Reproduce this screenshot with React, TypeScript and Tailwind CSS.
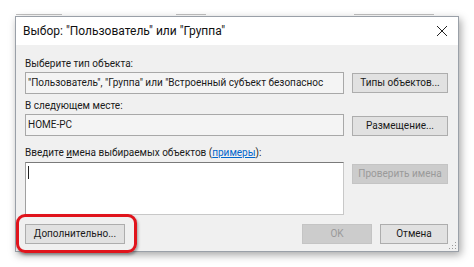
import React from "react";

const font = { fontFamily: 'Roboto, "Noto Sans", sans-serif' };

function Btn({
  children,
  disabled = false,
  className = "",
}: {
  children: React.ReactNode;
  disabled?: boolean;
  className?: string;
}) {
  return (
    <div
      className={`h-[20px] flex items-center justify-center border text-[10px] leading-none whitespace-nowrap ${
        disabled
          ? "bg-[#cccccc] border-[#c4c4c4] text-[#9a9a9a]"
          : "bg-[#e1e1e1] border-[#adadad] text-[#1a1a1a]"
      } ${className}`}
    >
      {children}
    </div>
  );
}

export default function App() {
  return (
    <div className="w-[474px] h-[267px] bg-white overflow-hidden relative" style={font}>
      {/* faint window behind */}
      <div className="absolute left-[16px] top-[14px] w-[46px] h-px bg-[#9a9a9a] opacity-60" />
      <div className="absolute left-[176px] top-[14px] w-[30px] h-px bg-[#9a9a9a] opacity-60" />
      <div className="absolute left-[354px] top-[14px] w-[80px] h-px bg-[#9a9a9a] opacity-60" />

      <div className="ml-[15px] mt-[16px] w-[444px] h-[236px] flex flex-col border border-[#9aa0a8] shadow-[2px_3px_8px_rgba(0,0,0,0.35)] relative">
        {/* title bar */}
        <div className="h-[28px] bg-white flex items-center justify-between pl-[7px] pr-[8px] shrink-0">
          <div className="text-[12px] text-[#111]">Выбор: "Пользователь" или "Группа"</div>
          <svg width="12" height="12" viewBox="0 0 12 12" className="mr-[2px]">
            <path d="M1 1 L11 11 M11 1 L1 11" stroke="#222" strokeWidth="1" fill="none" />
          </svg>
        </div>

        {/* body */}
        <div className="flex-1 bg-[#f0f0f0] pl-[9px] pr-[10px] flex flex-col text-[10px] text-[#1a1a1a]">
          <div className="h-[16px] mt-[11px] leading-[16px]">Выберите тип объекта:</div>
          <div className="flex gap-[8px]">
            <div className="w-[319px] h-[22px] border border-[#a8a8a8] bg-[#f4f4f4] px-[2px] leading-[20px] overflow-hidden whitespace-nowrap">
              "Пользователь", "Группа" или "Встроенный субъект безопаснос
            </div>
            <Btn className="w-[96px] mt-[1px]">Типы объектов...</Btn>
          </div>

          <div className="h-[16px] mt-[4px] leading-[16px]">В следующем месте:</div>
          <div className="flex gap-[8px]">
            <div className="w-[319px] h-[22px] border border-[#a8a8a8] bg-[#f4f4f4] px-[2px] leading-[20px]">
              HOME-PC
            </div>
            <Btn className="w-[96px] mt-[2px]">Размещение...</Btn>
          </div>

          <div className="h-[16px] mt-[9px] leading-[16px]">
            Введите <span className="underline">и</span>мена выбираемых объектов (
            <span className="text-[#0066cc] underline">примеры</span>):
          </div>
          <div className="flex gap-[8px] mt-[1px]">
            <div className="w-[319px] h-[53px] bg-white border border-[#c8c8c8] border-t-[#7a7a7a] border-l-[#a0a0a0] relative">
              <div className="absolute left-[2px] top-[3px] w-px h-[13px] bg-[#222]" />
            </div>
            <Btn disabled className="w-[96px] mt-[2px]">
              Проверить имена
            </Btn>
          </div>

          <div className="flex mt-[9px] items-start">
            <div className="relative">
              <Btn className="w-[100px]">Дополнительно...</Btn>
              <div className="absolute -left-[9px] -top-[10px] w-[121px] h-[39px] border-[3px] border-[#e0141c] rounded-[9px] shadow-[1px_2px_3px_rgba(0,0,0,0.35)]" />
            </div>
            <div className="flex-1" />
            <Btn disabled className="w-[70px]">
              OK
            </Btn>
            <Btn className="w-[68px] ml-[8px]">Отмена</Btn>
          </div>
        </div>

        {/* resize grip */}
        <svg width="8" height="8" viewBox="0 0 8 8" className="absolute right-[1px] bottom-[1px]">
          <rect x="6" y="0" width="1" height="1" fill="#9a9a9a" />
          <rect x="3" y="3" width="1" height="1" fill="#9a9a9a" />
          <rect x="6" y="3" width="1" height="1" fill="#9a9a9a" />
          <rect x="0" y="6" width="1" height="1" fill="#9a9a9a" />
          <rect x="3" y="6" width="1" height="1" fill="#9a9a9a" />
          <rect x="6" y="6" width="1" height="1" fill="#9a9a9a" />
        </svg>
      </div>
    </div>
  );
}
